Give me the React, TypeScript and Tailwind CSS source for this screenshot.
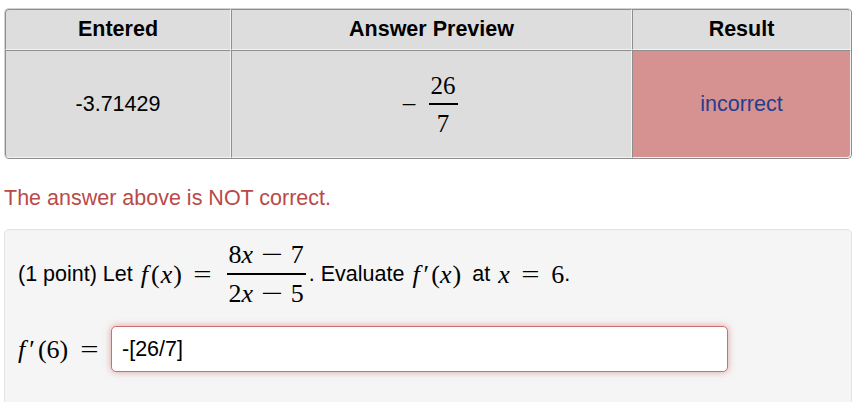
import React from 'react';

const sans = "font-['Liberation_Sans',Arial,sans-serif]";
const serif = "font-['Liberation_Serif','Times_New_Roman',serif]";

const cell =
  "flex items-center justify-center border border-t-[#8e8e8e] border-l-[#8e8e8e] border-b-[#f3f3f3] border-r-[#f3f3f3]";

function V({ children, r = 'mr-[1px]' }: { children: React.ReactNode; r?: string }) {
  return <span className={`italic ${r}`}>{children}</span>;
}

function Minus({ m = 'mx-[11px] scale-x-150' }: { m?: string }) {
  return <span className={`inline-block ${m}`}>−</span>;
}

function Frac({ top, bottom }: { top: React.ReactNode; bottom: React.ReactNode }) {
  return (
    <span className="inline-flex flex-col items-center mx-[3px] leading-none">
      <span className="px-[2px] pb-[5px]">{top}</span>
      <span className="h-[2px] w-full bg-black" />
      <span className="px-[2px] pt-[6px]">{bottom}</span>
    </span>
  );
}

export default function App() {
  return (
    <div className={`w-[854px] h-[402px] overflow-hidden bg-white text-black ${sans}`}>
      {/* results table */}
      <div className="ml-[4px] mt-[8px] w-[848px] rounded-[5px] overflow-hidden border border-t-[#d2d2d2] border-l-[#d2d2d2] border-r-[#8c8c8c] border-b-[#8c8c8c] bg-[#dddddd]">
        <div className="grid grid-cols-[226px_401px_219px] h-[41px] text-[21.5px] font-bold">
          <div className={`${cell} rounded-tl-[4px]`}>Entered</div>
          <div className={cell}>Answer Preview</div>
          <div className={`${cell} rounded-tr-[4px]`}>Result</div>
        </div>
        <div className="grid grid-cols-[226px_401px_219px] h-[108px] text-[21.5px]">
          <div className={`${cell} rounded-bl-[4px]`}>-3.71429</div>
          <div className={cell}>
            <span className={`${serif} text-[25px] flex items-center`}>
              <Minus m="mr-[9px] mt-[2px] scale-x-110" />
              <Frac top="26" bottom="7" />
            </span>
          </div>
          <div className={`${cell} rounded-br-[4px] bg-[#d69191] text-[#253d8e]`}>incorrect</div>
        </div>
      </div>

      <p className="ml-[4px] mt-[27px] text-[21.5px] leading-[25px] text-[#b94a48]">
        The answer above is NOT correct.
      </p>

      {/* problem box */}
      <div className="ml-[4px] mt-[18px] w-[848px] h-[200px] rounded-[5px] border border-[#e3e3e3] bg-[#f5f5f5] pl-[13px] pt-[12px]">
        <div className="flex items-center h-[64px] text-[21.5px]">
          <span>(1 point) Let</span>
          <span className={`${serif} text-[26px] ml-[8px] flex items-center`}>
            <V r="mr-[3px]">f</V>
            <span className="mr-[1px]">(</span>
            <V>x</V>
            <span>)</span>
            <span className="ml-[13px] mr-[14px] scale-x-125">=</span>
            <Frac
              top={
                <span>
                  8<V>x</V>
                  <Minus />7
                </span>
              }
              bottom={
                <span>
                  2<V>x</V>
                  <Minus />5
                </span>
              }
            />
          </span>
          <span>. Evaluate</span>
          <span className={`${serif} text-[26px] ml-[8px] mr-[11px]`}>
            <V r="mr-[0px]">f</V>
            <span className="ml-[4px] mr-[2px]">′</span>(<V>x</V>)
          </span>
          <span>at</span>
          <span className={`${serif} text-[26px] ml-[8px] flex items-center`}>
            <V>x</V>
            <span className="ml-[12px] mr-[14px] scale-x-125">=</span>6
          </span>
          <span>.</span>
        </div>

        <div className="flex items-center mt-[20px]">
          <span className={`${serif} text-[26px] w-[93px] shrink-0 flex items-center`}>
            <V r="mr-[0px]">f</V>
            <span className="ml-[4px] mr-[3px]">′</span>(6)
            <span className="ml-[14px] scale-x-125">=</span>
          </span>
          <div className="w-[617px] h-[46px] rounded-[5px] border border-[#cd6f6f] bg-white flex items-center pl-[10px] text-[21.5px] shadow-[0_0_7px_rgba(200,90,90,0.55)]">
            -[26/7]
          </div>
        </div>
      </div>
    </div>
  );
}
